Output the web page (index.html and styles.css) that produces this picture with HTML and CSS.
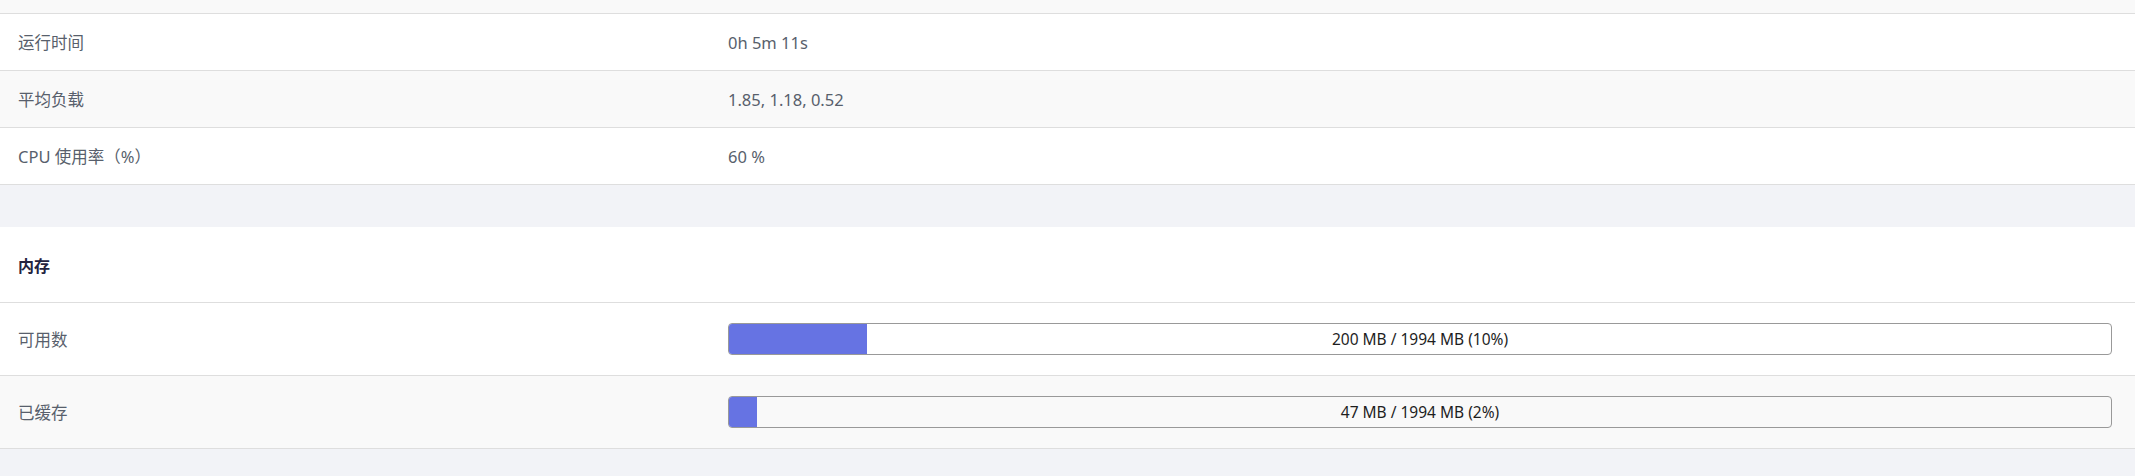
FILE: index.html
```html
<!DOCTYPE html>
<html lang="zh-CN">
<head>
<meta charset="utf-8">
<title>状态</title>
<link rel="stylesheet" href="styles.css">
</head>
<body>
<div class="page">
  <div class="table">
    <div class="row stub"></div>
    <div class="row">
      <div class="cell label">运行时间</div>
      <div class="cell value">0h 5m 11s</div>
    </div>
    <div class="row alt">
      <div class="cell label">平均负载</div>
      <div class="cell value">1.85, 1.18, 0.52</div>
    </div>
    <div class="row">
      <div class="cell label">CPU 使用率（%）</div>
      <div class="cell value">60 %</div>
    </div>
  </div>

  <div class="gap"></div>

  <div class="table">
    <div class="section-head">内存</div>
    <div class="row tall">
      <div class="cell label">可用数</div>
      <div class="cell value">
        <div class="bar">
          <div class="fill" style="width:10%"></div>
          <div class="bar-text">200 MB / 1994 MB (10%)</div>
        </div>
      </div>
    </div>
    <div class="row tall alt">
      <div class="cell label">已缓存</div>
      <div class="cell value">
        <div class="bar">
          <div class="fill" style="width:2%"></div>
          <div class="bar-text">47 MB / 1994 MB (2%)</div>
        </div>
      </div>
    </div>
  </div>

  <div class="gap bottom"></div>
</div>
</body>
</html>
```

FILE: styles.css
```css
html, body {
  margin: 0;
  padding: 0;
  background: #f2f3f7;
}

body {
  font-family: "Noto Sans", "Noto Sans CJK SC", sans-serif;
  font-size: 16.5px;
  color: #585f6c;
}

.page {
  display: flex;
  flex-direction: column;
}

.table {
  display: flex;
  flex-direction: column;
  background: #fff;
}

.row {
  display: grid;
  grid-template-columns: 710px 1fr;
  height: 56px;
  border-bottom: 1px solid #dedede;
  background: #fff;
}

.row.alt {
  background: #f9f9f9;
}

.row.stub {
  height: 13px;
  background: #f9f9f9;
}

.row.tall {
  height: 72px;
}

.cell {
  display: flex;
  align-items: center;
  padding: 0 18px;
  min-width: 0;
}

.cell.value {
  padding-right: 23px;
}

.gap {
  height: 42px;
  background: #f2f3f7;
}

.gap.bottom {
  height: 28px;
}

.section-head {
  height: 75px;
  display: flex;
  align-items: center;
  padding: 0 18px;
  font-size: 16px;
  font-weight: bold;
  color: #23233f;
  border-bottom: 1px solid #dedede;
  background: #fff;
}

.bar {
  position: relative;
  flex: 1;
  height: 32px;
  box-sizing: border-box;
  border: 1px solid #999;
  border-radius: 4px;
  overflow: hidden;
  display: flex;
}

.fill {
  background: #6673e3;
  height: 100%;
}

.bar-text {
  position: absolute;
  inset: 0;
  display: flex;
  align-items: center;
  justify-content: center;
  color: #1e1e1e;
  font-size: 15.5px;
}
```
